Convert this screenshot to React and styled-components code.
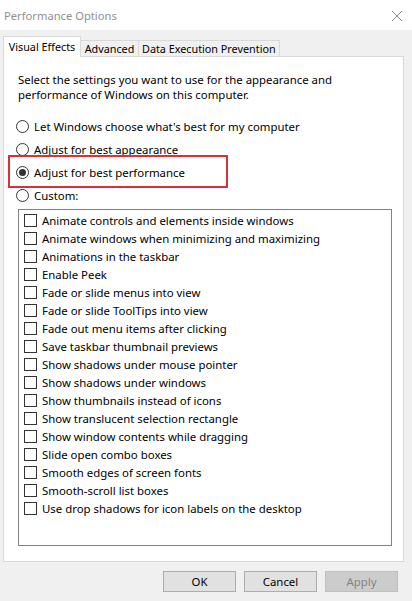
import React, { useState } from "react";
import styled, { createGlobalStyle } from "styled-components";

const GlobalStyle = createGlobalStyle`
  html, body {
    margin: 0;
    padding: 0;
    background: #f0f0f0;
  }
  body {
    font-family: "Noto Sans", "Open Sans", sans-serif;
    font-size: 11.4px;
    color: #000;
  }
`;

const Window = styled.div`
  width: 412px;
  height: 601px;
  background: #f0f0f0;
  display: flex;
  flex-direction: column;
  overflow: hidden;
`;

const TitleBar = styled.div`
  height: 30px;
  background: #fff;
  display: flex;
  align-items: center;
  justify-content: space-between;
  padding: 0 8px 0 4px;
  box-sizing: border-box;
`;

const Title = styled.span`
  color: #8f8f8f;
  font-size: 11.2px;
  margin-top: 1px;
`;

const CloseButton = styled.span`
  width: 12px;
  height: 12px;
  display: flex;
  margin-right: 1px;
  margin-top: 1px;
`;

const Body = styled.div`
  padding: 6px 8px 0 3px;
  display: flex;
  flex-direction: column;
`;

const TabStrip = styled.div`
  display: flex;
  align-items: flex-end;
  height: 21px;
  margin-bottom: -1px;
  position: relative;
  z-index: 1;
`;

const Tab = styled.div`
  box-sizing: border-box;
  height: ${p => (p.$active ? "21px" : "17px")};
  min-width: ${p => p.$width}px;
  padding: 0 3px;
  font-size: 10.8px;
  background: ${p => (p.$active ? "#fff" : "#f0f0f0")};
  border: 1px solid #d9d9d9;
  border-bottom: ${p => (p.$active ? "none" : "1px solid #d9d9d9")};
  border-left: ${p => (p.$first || p.$active ? "1px solid #d9d9d9" : "none")};
  display: flex;
  align-items: center;
  justify-content: center;
  padding-bottom: ${p => (p.$active ? "2px" : "0")};
  white-space: nowrap;
`;

const Panel = styled.div`
  box-sizing: border-box;
  height: 506px;
  background: #fff;
  border: 1px solid #d9d9d9;
  padding: 15px 12px 0 12px;
  display: flex;
  flex-direction: column;
`;

const Intro = styled.p`
  margin: 0 0 0 2px;
  line-height: 15px;
`;

const RadioGroup = styled.div`
  margin-top: 13px;
  display: flex;
  flex-direction: column;
  position: relative;
`;

const RadioRow = styled.label`
  height: 23px;
  display: flex;
  align-items: center;
  gap: 5px;
  position: relative;
`;

const RadioCircle = styled.span`
  box-sizing: border-box;
  width: 13px;
  height: 13px;
  border-radius: 50%;
  border: 1px solid #333;
  background: #fff;
  display: flex;
  align-items: center;
  justify-content: center;

  &::after {
    content: "";
    width: 7px;
    height: 7px;
    border-radius: 50%;
    background: ${p => (p.$checked ? "#333" : "transparent")};
  }
`;

const Highlight = styled.span`
  position: absolute;
  left: -8px;
  top: -6px;
  width: 220px;
  height: 33px;
  box-sizing: border-box;
  border: 2px solid #d2343a;
  pointer-events: none;
`;

const ListBox = styled.div`
  box-sizing: border-box;
  margin: 2px 0 0 2px;
  width: 374px;
  height: 337px;
  border: 1px solid #828282;
  background: #fff;
  padding: 1px 0 0 5px;
  display: flex;
  flex-direction: column;
`;

const CheckRow = styled.label`
  height: 18px;
  display: flex;
  align-items: center;
  gap: 5px;
`;

const CheckBox = styled.span`
  box-sizing: border-box;
  width: 13px;
  height: 13px;
  border: 1px solid #333;
  background: #fff;
  display: flex;
  align-items: center;
  justify-content: center;
`;

const Footer = styled.div`
  display: flex;
  justify-content: flex-end;
  gap: 8px;
  padding: 9px 6px 0 0;
`;

const Button = styled.button`
  box-sizing: border-box;
  width: 73px;
  height: 21px;
  font: inherit;
  background: ${p => (p.disabled ? "#cccccc" : "#e1e1e1")};
  border: 1px solid ${p => (p.disabled ? "#bfbfbf" : "#adadad")};
  color: ${p => (p.disabled ? "#838383" : "#000")};
  padding: 0;
`;

const radios = [
  "Let Windows choose what's best for my computer",
  "Adjust for best appearance",
  "Adjust for best performance",
  "Custom:",
];

const effects = [
  "Animate controls and elements inside windows",
  "Animate windows when minimizing and maximizing",
  "Animations in the taskbar",
  "Enable Peek",
  "Fade or slide menus into view",
  "Fade or slide ToolTips into view",
  "Fade out menu items after clicking",
  "Save taskbar thumbnail previews",
  "Show shadows under mouse pointer",
  "Show shadows under windows",
  "Show thumbnails instead of icons",
  "Show translucent selection rectangle",
  "Show window contents while dragging",
  "Slide open combo boxes",
  "Smooth edges of screen fonts",
  "Smooth-scroll list boxes",
  "Use drop shadows for icon labels on the desktop",
];

export default function App() {
  const [choice, setChoice] = useState(2);
  const [checked, setChecked] = useState({});

  return (
    <Window>
      <GlobalStyle />
      <TitleBar>
        <Title>Performance Options</Title>
        <CloseButton>
          <svg width="12" height="12" viewBox="0 0 12 12">
            <path d="M1 1 L11 11 M11 1 L1 11" stroke="#8a8a8a" strokeWidth="1" />
          </svg>
        </CloseButton>
      </TitleBar>
      <Body>
        <TabStrip>
          <Tab $active $first $width={78}>Visual Effects</Tab>
          <Tab $width={58}>Advanced</Tab>
          <Tab $width={130}>Data Execution Prevention</Tab>
        </TabStrip>
        <Panel>
          <Intro>
            Select the settings you want to use for the appearance and
            <br />
            performance of Windows on this computer.
          </Intro>
          <RadioGroup>
            {radios.map((r, i) => (
              <RadioRow key={r} onClick={() => setChoice(i)}>
                <RadioCircle $checked={choice === i} />
                {r}
                {i === 2 && <Highlight />}
              </RadioRow>
            ))}
          </RadioGroup>
          <ListBox>
            {effects.map(e => (
              <CheckRow
                key={e}
                onClick={() => setChecked(c => ({ ...c, [e]: !c[e] }))}
              >
                <CheckBox>
                  {checked[e] && (
                    <svg width="9" height="9" viewBox="0 0 9 9">
                      <path d="M1 4.5 L3.5 7 L8 1.5" stroke="#333" strokeWidth="1.4" fill="none" />
                    </svg>
                  )}
                </CheckBox>
                {e}
              </CheckRow>
            ))}
          </ListBox>
        </Panel>
        <Footer>
          <Button>OK</Button>
          <Button>Cancel</Button>
          <Button disabled>Apply</Button>
        </Footer>
      </Body>
    </Window>
  );
}
